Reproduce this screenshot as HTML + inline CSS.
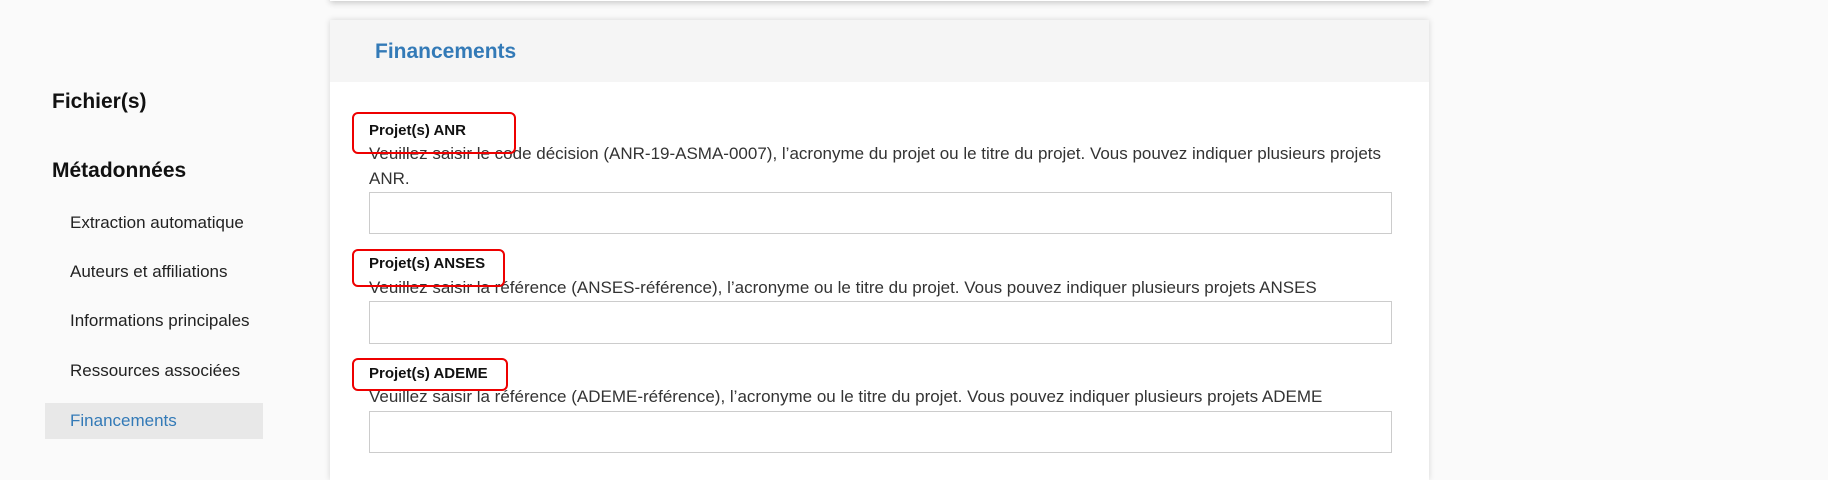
<!DOCTYPE html>
<html><head><meta charset="utf-8"><style>
html,body{margin:0;padding:0;}
body{width:1828px;height:462px;background:#fafafa;position:relative;overflow:hidden;font-family:"Liberation Sans",sans-serif;color:#111;}
.abs{position:absolute;white-space:nowrap;}
.topcard{position:absolute;left:330px;top:-20px;width:1099px;height:21px;background:#fff;box-shadow:0 2px 6px rgba(0,0,0,.2);}
.card{position:absolute;left:330px;top:20px;width:1099px;height:460px;background:#fff;box-shadow:0 0 6px rgba(0,0,0,.15);}
.hdr{position:absolute;left:0;top:0;width:1099px;height:62px;background:#f5f5f5;}
.title{left:45px;top:20px;font-size:21px;font-weight:bold;color:#337ab7;}
.side-h{left:52px;font-size:21px;font-weight:bold;color:#111;}
.item{left:70px;font-size:17px;color:#222;}
.active{position:absolute;left:45px;top:403px;width:218px;height:36px;background:#e8e8e8;}
.lbl{font-size:15px;font-weight:bold;color:#111;}
.desc{font-size:17px;color:#333;}
.inp{position:absolute;left:369px;width:1023px;border:1px solid #ccc;background:#fff;box-sizing:border-box;}
.red{position:absolute;border:2px solid #e00;border-radius:6px;box-sizing:border-box;}
</style></head><body>
<div class="topcard"></div>
<div class="card"><div class="hdr"></div><div class="abs title">Financements</div></div>

<div class="abs side-h" style="top:90px">Fichier(s)</div>
<div class="abs side-h" style="top:159px">Métadonnées</div>
<div class="abs item" style="top:213px">Extraction automatique</div>
<div class="abs item" style="top:262px">Auteurs et affiliations</div>
<div class="abs item" style="top:311px">Informations principales</div>
<div class="abs item" style="top:361px">Ressources associées</div>
<div class="active"></div>
<div class="abs item" style="top:411px;color:#337ab7">Financements</div>

<div class="abs lbl" style="left:369px;top:122px">Projet(s) ANR</div>
<div class="abs desc" style="left:369px;top:144px">Veuillez saisir le code décision (ANR-19-ASMA-0007), l’acronyme du projet ou le titre du projet. Vous pouvez indiquer plusieurs projets</div>
<div class="abs desc" style="left:369px;top:169px">ANR.</div>
<div class="inp" style="top:192px;height:42px"></div>
<div class="red" style="left:352px;top:112px;width:164px;height:42px"></div>

<div class="abs lbl" style="left:369px;top:255px">Projet(s) ANSES</div>
<div class="abs desc" style="left:369px;top:278px">Veuillez saisir la référence (ANSES-référence), l’acronyme ou le titre du projet. Vous pouvez indiquer plusieurs projets ANSES</div>
<div class="inp" style="top:301px;height:43px"></div>
<div class="red" style="left:352px;top:249px;width:153px;height:38px"></div>

<div class="abs lbl" style="left:369px;top:365px">Projet(s) ADEME</div>
<div class="abs desc" style="left:369px;top:387px">Veuillez saisir la référence (ADEME-référence), l’acronyme ou le titre du projet. Vous pouvez indiquer plusieurs projets ADEME</div>
<div class="inp" style="top:411px;height:42px"></div>
<div class="red" style="left:352px;top:358px;width:156px;height:33px"></div>
</body></html>
